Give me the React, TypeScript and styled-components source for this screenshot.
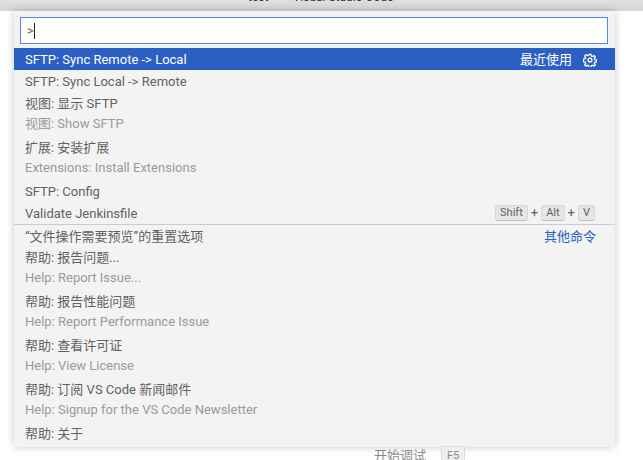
import { Fragment } from 'react';
import styled, { createGlobalStyle } from 'styled-components';

type Command = {
    label: string,
    sub?: boolean,
    active?: boolean,
    side?: string,
    keys?: string[],
    link?: string,
    border?: boolean
};

const commands: Command[] = [
    { label: 'SFTP: Sync Remote -> Local', active: true, side: '最近使用' },
    { label: 'SFTP: Sync Local -> Remote' },
    { label: '视图: 显示 SFTP' },
    { label: '视图: Show SFTP', sub: true },
    { label: '扩展: 安装扩展' },
    { label: 'Extensions: Install Extensions', sub: true },
    { label: 'SFTP: Config' },
    { label: 'Validate Jenkinsfile', keys: ['Shift', 'Alt', 'V'] },
    { label: '“文件操作需要预览”的重置选项', link: '其他命令', border: true },
    { label: '帮助: 报告问题...' },
    { label: 'Help: Report Issue...', sub: true },
    { label: '帮助: 报告性能问题' },
    { label: 'Help: Report Performance Issue', sub: true },
    { label: '帮助: 查看许可证' },
    { label: 'Help: View License', sub: true },
    { label: '帮助: 订阅 VS Code 新闻邮件' },
    { label: 'Help: Signup for the VS Code Newsletter', sub: true },
    { label: '帮助: 关于' }
];

const GlobalStyle = createGlobalStyle`
    html, body {
        margin: 0;
        padding: 0;
        background: #fff;
    }
    body {
        font-family: Roboto, "Noto Sans CJK SC", sans-serif;
    }
`;

const Page = styled.div`
    width: 643px;
    height: 460px;
    overflow: hidden;
    position: relative;
    display: flex;
    flex-direction: column;
`;

const TitleBar = styled.div`
    height: 11px;
    flex: none;
    background: linear-gradient(#e0e0e0, #d6d6d6);
    overflow: hidden;
    display: flex;
    padding-left: 248px;
    color: #333;
    font-size: 12px;
    line-height: 12px;
`;

const TitleText = styled.span`
    margin-top: -9px;
    white-space: pre;
`;

const Palette = styled.div`
    position: absolute;
    left: 14px;
    top: 11px;
    width: 601px;
    height: 436px;
    background: #f3f3f3;
    box-shadow: 0 0 8px rgba(0, 0, 0, 0.22);
    display: flex;
    flex-direction: column;
`;

const InputBox = styled.div`
    margin: 6px 7px 4px 6px;
    height: 27px;
    flex: none;
    box-sizing: border-box;
    border: 1px solid #4a8ae8;
    background: #fff;
    display: flex;
    align-items: center;
    padding-left: 6px;
    color: #616161;
    font-size: 13px;
`;

const Caret = styled.span`
    width: 1px;
    height: 16px;
    background: #222;
`;

const List = styled.div`
    display: flex;
    flex-direction: column;
`;

const Row = styled.div<{ $active?: boolean; $border?: boolean }>`
    height: 22px;
    box-sizing: border-box;
    display: flex;
    align-items: center;
    justify-content: space-between;
    padding: 2px 19px 0 11px;
    font-size: 13px;
    line-height: 16px;
    color: ${p => (p.$active ? '#fff' : '#616161')};
    background: ${p => (p.$active ? '#2b5fc4' : 'transparent')};
    border-top: ${p => (p.$border ? '1px solid #ccc9de' : 'none')};
`;

const Label = styled.span<{ $sub?: boolean }>`
    color: ${p => (p.$sub ? '#9a9a9a' : 'inherit')};
    padding-bottom: ${p => (p.$sub ? '4px' : '0')};
    white-space: nowrap;
`;

const Side = styled.span`
    display: flex;
    align-items: center;
    gap: 11px;
    margin-right: -1px;
`;

const KeyGroup = styled.span`
    display: flex;
    align-items: center;
    gap: 3px;
    margin: -2px 1px 0 0;
`;

const Key = styled.span`
    height: 16px;
    box-sizing: border-box;
    padding: 0 4px;
    display: flex;
    align-items: center;
    background: #e6e6e6;
    border: 1px solid #d8d8d8;
    border-bottom-color: #bdbdbd;
    border-radius: 3px;
    font-size: 11px;
`;

const LinkText = styled.span`
    color: #2b5fc4;
`;

const Background = styled.div`
    position: absolute;
    left: 374px;
    top: 446px;
    display: flex;
    align-items: center;
    gap: 15px;
    color: #8a8a8a;
    font-size: 13px;
    line-height: 16px;
`;

const BackgroundKey = styled.span`
    height: 18px;
    padding: 0 5px;
    display: flex;
    align-items: center;
    background: #efefef;
    border: 1px solid #ddd;
    font-size: 11px;
`;

const GearIcon = () => (
    <svg width="14" height="14" viewBox="0 0 16 16" fill="none" stroke="#fff" strokeWidth="1.5">
        <circle cx="8" cy="8" r="2.2" />
        <path d="M6.9 1.5h2.2l.4 1.9 1.3.6 1.7-1 1.5 1.5-1 1.7.6 1.3 1.9.4v2.2l-1.9.4-.6 1.3 1 1.7-1.5 1.5-1.7-1-1.3.6-.4 1.9H6.9l-.4-1.9-1.3-.6-1.7 1-1.5-1.5 1-1.7-.6-1.3-1.9-.4V6.9l1.9-.4.6-1.3-1-1.7 1.5-1.5 1.7 1 1.3-.6z" />
    </svg>
);

export default function App() {
    return (
        <Page>
            <GlobalStyle />
            <TitleBar>
                <TitleText>test   —  Visual Studio Code</TitleText>
            </TitleBar>
            <Palette>
                <InputBox>
                    &gt;<Caret />
                </InputBox>
                <List>
                    {commands.map(c => (
                        <Row key={c.label} $active={c.active} $border={c.border}>
                            <Label $sub={c.sub}>{c.label}</Label>
                            {c.side && (
                                <Side>
                                    {c.side}
                                    <GearIcon />
                                </Side>
                            )}
                            {c.keys && (
                                <KeyGroup>
                                    {c.keys.map((k, i) => (
                                        <Fragment key={k}>
                                            {i > 0 && ' + '}
                                            <Key>{k}</Key>
                                        </Fragment>
                                    ))}
                                </KeyGroup>
                            )}
                            {c.link && <LinkText>{c.link}</LinkText>}
                        </Row>
                    ))}
                </List>
            </Palette>
            <Background>
                开始调试
                <BackgroundKey>F5</BackgroundKey>
            </Background>
        </Page>
    );
}
